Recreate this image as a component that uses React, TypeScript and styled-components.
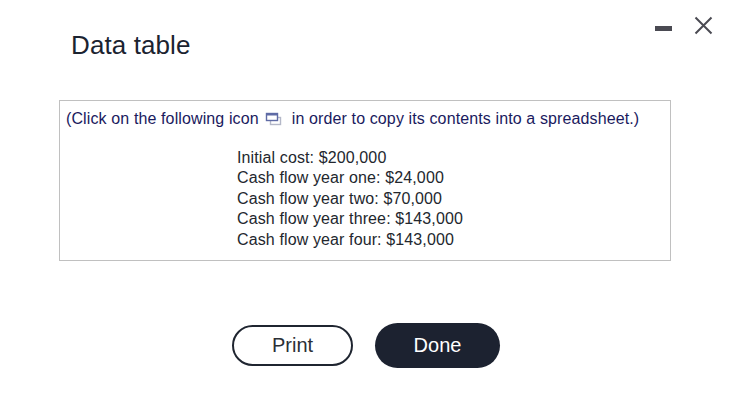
import React from "react";
import styled, { createGlobalStyle } from "styled-components";

const Global = createGlobalStyle`
  html, body { margin: 0; padding: 0; background: #fff; }
  body { font-family: "Liberation Sans", Arial, sans-serif; }
`;

const Page = styled.div`
  width: 730px;
  height: 407px;
  display: flex;
  flex-direction: column;
  overflow: hidden;
  background: #fff;
`;

const Header = styled.header`
  height: 100px;
  display: flex;
  justify-content: space-between;
  align-items: flex-start;
  padding: 0 17px 0 71px;
  box-sizing: border-box;
`;

const Title = styled.h1`
  margin: 30px 0 0;
  font-size: 26px;
  line-height: 30px;
  font-weight: 400;
  letter-spacing: 0.1px;
  color: #1b2330;
`;

const Controls = styled.div`
  display: flex;
  align-items: center;
  gap: 19px;
  margin-top: 16px;
`;

const IconButton = styled.button`
  width: 20px;
  height: 20px;
  padding: 0;
  border: 0;
  background: none;
  display: block;
`;

const Panel = styled.section`
  width: 612px;
  height: 161px;
  margin-left: 59px;
  box-sizing: border-box;
  border: 1px solid #c0c0c0;
  padding: 8px 6px 0;
  font-size: 16px;
  line-height: 20.4px;
  letter-spacing: 0.12px;
`;

const Note = styled.p`
  margin: 0;
  color: #1a1a5e;
  display: flex;
  align-items: center;
`;

const CopyIcon = styled.svg`
  width: 18px;
  height: 14px;
  margin: 0 9px 0 6px;
  flex: none;
`;

const Rows = styled.div`
  margin: 18.6px 0 0 171px;
  color: #23272e;
`;

const Row = styled.div`
  height: 20.4px;
  white-space: nowrap;
`;

const Actions = styled.div`
  display: flex;
  align-items: center;
  gap: 22px;
  margin: 62px 0 0 232px;
`;

const Button = styled.button<{ $primary?: boolean }>`
  font-family: inherit;
  font-size: 20px;
  box-sizing: border-box;
  padding: 0;
  border-radius: 24px;
  width: ${(p) => (p.$primary ? "125px" : "121px")};
  height: ${(p) => (p.$primary ? "45px" : "41px")};
  border: ${(p) => (p.$primary ? "0" : "2px solid #1f2530")};
  background: ${(p) => (p.$primary ? "#1c2230" : "#fff")};
  color: ${(p) => (p.$primary ? "#fff" : "#2b2f36")};
`;

const rows = [
  "Initial cost: $200,000",
  "Cash flow year one: $24,000",
  "Cash flow year two: $70,000",
  "Cash flow year three: $143,000",
  "Cash flow year four: $143,000",
];

export default function App() {
  return (
    <Page>
      <Global />
      <Header>
        <Title>Data table</Title>
        <Controls>
          <IconButton aria-label="Minimize">
            <svg width="20" height="20" viewBox="0 0 20 20">
              <rect x="1" y="10" width="17" height="5" fill="#4a4a52" />
            </svg>
          </IconButton>
          <IconButton aria-label="Close">
            <svg width="20" height="20" viewBox="0 0 20 20">
              <path d="M2.5 1.5 L18.5 17.5 M18.5 1.5 L2.5 17.5" stroke="#4a4a52" strokeWidth="2" fill="none" />
            </svg>
          </IconButton>
        </Controls>
      </Header>
      <Panel>
        <Note>
          (Click on the following icon
          <CopyIcon viewBox="0 0 18 14">
            <rect x="5.5" y="5.5" width="10" height="7" fill="#fff" stroke="#b4b8c8" strokeWidth="1.4" />
            <rect x="1.5" y="1.5" width="11" height="7" fill="#fff" stroke="#5f6ba5" strokeWidth="1.4" />
            <rect x="1.5" y="1.5" width="11" height="2" fill="#5f6ba5" />
          </CopyIcon>
          in order to copy its contents into a spreadsheet.)
        </Note>
        <Rows>
          {rows.map((r) => (
            <Row key={r}>{r}</Row>
          ))}
        </Rows>
      </Panel>
      <Actions>
        <Button>Print</Button>
        <Button $primary>Done</Button>
      </Actions>
    </Page>
  );
}
